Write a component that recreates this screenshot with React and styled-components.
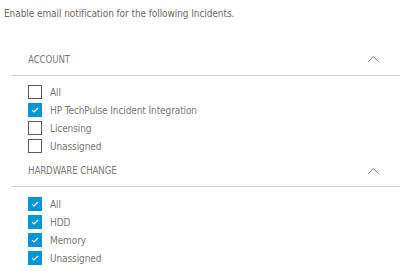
import React from "react";
import styled, { createGlobalStyle } from "styled-components";

const Global = createGlobalStyle`
  html, body { margin: 0; padding: 0; background: #fff; }
  body { font-family: "DejaVu Sans Condensed", "Liberation Sans", sans-serif; }
`;

const Page = styled.div`
  width: 406px;
  padding: 6px 6px 0 4px;
  box-sizing: border-box;
`;

const Intro = styled.p`
  margin: 0 0 21px 0;
  font-size: 10px;
  line-height: 16px;
  color: #6a6a6a;
  letter-spacing: -0.08px;
`;

const Section = styled.section`
  margin-left: 8px;
`;

const Header = styled.div`
  display: flex;
  align-items: center;
  justify-content: space-between;
  height: ${(p) => p.$h}px;
  padding: 0 21px 0 16px;
  border-bottom: 1px solid #d2d2d2;
`;

const Title = styled.span`
  font-size: 9.6px;
  color: #7a7a7a;
  letter-spacing: -0.1px;
`;

const List = styled.ul`
  list-style: none;
  margin: 0;
  padding: ${(p) => p.$pt}px 0 0 16px;
`;

const Row = styled.li`
  display: flex;
  align-items: center;
  gap: 8px;
  height: 18px;
`;

const Box = styled.span`
  width: 14px;
  height: 14px;
  box-sizing: border-box;
  display: flex;
  align-items: center;
  justify-content: center;
  border: 1px solid ${(p) => (p.$checked ? "#0096d6" : "#5a5a5a")};
  background: ${(p) => (p.$checked ? "#0096d6" : "#fff")};
`;

const Label = styled.span`
  font-size: 10px;
  color: #777;
  letter-spacing: -0.1px;
`;

const Chevron = () => (
  <svg width="11" height="6" viewBox="0 0 11 6" fill="none">
    <path d="M0.5 5.5 L5.5 0.7 L10.5 5.5" stroke="#777" strokeWidth="1" />
  </svg>
);

const Check = () => (
  <svg width="10" height="8" viewBox="0 0 10 8" fill="none">
    <path d="M2 4.2 L4 6 L8 2" stroke="#fff" strokeWidth="1.1" />
  </svg>
);

const sections = [
  {
    title: "ACCOUNT",
    h: 32,
    pt: 7,
    items: [
      ["All", false],
      ["HP TechPulse Incident Integration", true],
      ["Licensing", false],
      ["Unassigned", false],
    ],
  },
  {
    title: "HARDWARE CHANGE",
    h: 31,
    pt: 8,
    items: [
      ["All", true],
      ["HDD", true],
      ["Memory", true],
      ["Unassigned", true],
    ],
  },
];

export default function App() {
  return (
    <Page>
      <Global />
      <Intro>Enable email notification for the following Incidents.</Intro>
      {sections.map((s) => (
        <Section key={s.title}>
          <Header $h={s.h}>
            <Title>{s.title}</Title>
            <Chevron />
          </Header>
          <List $pt={s.pt}>
            {s.items.map(([label, checked]) => (
              <Row key={label}>
                <Box $checked={checked}>{checked && <Check />}</Box>
                <Label>{label}</Label>
              </Row>
            ))}
          </List>
        </Section>
      ))}
    </Page>
  );
}
